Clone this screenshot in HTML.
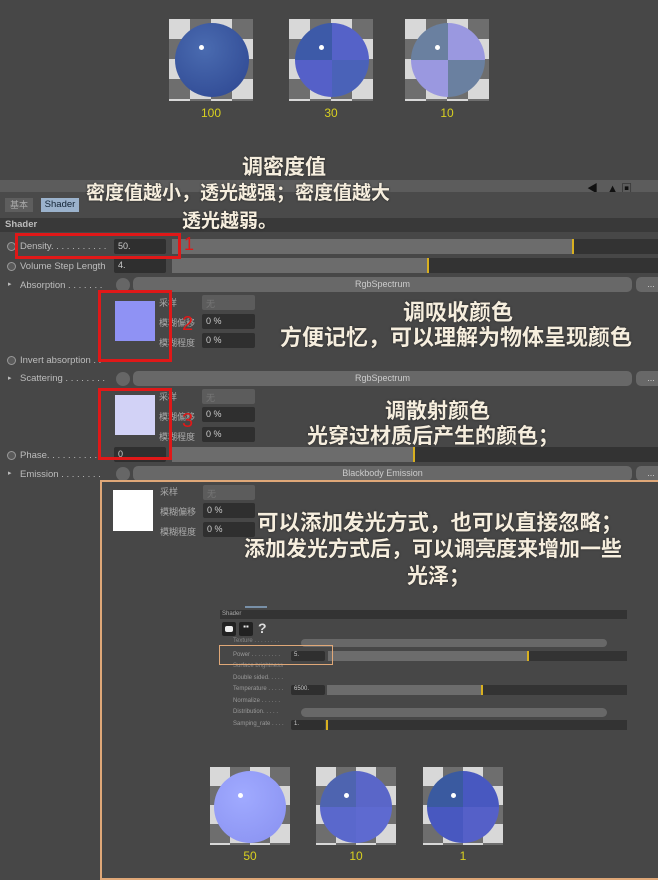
<!DOCTYPE html>
<html><head><meta charset="utf-8"><style>
*{margin:0;padding:0;box-sizing:border-box}
body{width:658px;height:877px;background:#474747;position:relative;overflow:hidden;font-family:"Liberation Sans","Noto Sans CJK SC",sans-serif}
.a{position:absolute}
.sph{position:absolute;width:84px;height:82px;background:
 conic-gradient(#6e6e6e 25%,#d8d8d8 0 50%,#6e6e6e 0 75%,#d8d8d8 0) 0 0/42px 40px;}
.ball{position:absolute;left:6px;top:4px;width:74px;height:74px;border-radius:50%}
.hl{position:absolute;width:5px;height:5px;border-radius:50%;background:#fff;left:24px;top:22px}
.lab{position:absolute;color:#d8d020;font-size:12px;text-align:center;width:84px}
.cap{position:absolute;color:#f6eede;font-size:21px;font-weight:bold;white-space:nowrap;text-shadow:0 0 2px #222}
.t{position:absolute;color:#bdbdbd;font-size:9.5px;white-space:nowrap}
.rad{position:absolute;width:9px;height:9px;border-radius:50%;border:1px solid #999;background:#5a5a5a}
.fld{position:absolute;background:#2f2f2f;color:#ccc;font-size:9px;padding:2px 4px;height:15px;border-radius:2px}
.bar{position:absolute;background:#333;height:15px}
.bar i{position:absolute;left:0;top:0;bottom:0;background:#6c6c6c;border-right:2px solid #d8b020}
.spec{position:absolute;background:#686868;height:15px;border-radius:5px;color:#ccc;font-size:9px;text-align:center;line-height:15px}
.btn{position:absolute;width:14px;height:14px;border-radius:50%;background:#666}
.red{position:absolute;border:3px solid #e01818}
.sw{position:absolute}
.cn{position:absolute;color:#aaa;font-size:9px}
</style></head><body>
<div class="sph" style="left:169px;top:19px"><div class="ball" style="background:radial-gradient(circle at 40% 35%,#4a6bb0,#2c4590)"><div class="hl"></div></div></div>
<div class="sph" style="left:289px;top:19px"><div class="ball" style="background:conic-gradient(#5562c8 25%,#4a62b8 0 50%,#5560c8 0 75%,#3d5aa8 0)"><div class="hl"></div></div></div>
<div class="sph" style="left:405px;top:19px"><div class="ball" style="background:conic-gradient(#9a98e0 25%,#6a80a0 0 50%,#9a98e0 0 75%,#6a80a0 0)"><div class="hl"></div></div></div>
<div class="lab" style="left:169px;top:106px">100</div>
<div class="lab" style="left:289px;top:106px">30</div>
<div class="lab" style="left:405px;top:106px">10</div>
<div class="cap" style="left:242px;top:151px;font-size:21px">调密度值</div>
<div class="a" style="left:0;top:180px;width:658px;height:12px;background:#5c5c5c"></div>
<div class="a" style="left:587px;top:180px;color:#111;font-size:11px">◀ &nbsp; ▲ ▣</div>
<div class="a" style="left:0;top:192px;width:658px;height:26px;background:#4a4a4a"></div>
<div class="a" style="left:5px;top:198px;width:28px;height:14px;background:#5e5e5e;color:#aaa;font-size:9px;text-align:center;line-height:14px">基本</div>
<div class="a" style="left:41px;top:198px;width:38px;height:14px;background:#9bb2cc;color:#123;font-size:9.5px;text-align:center;line-height:14px">Shader</div>
<div class="a" style="left:0;top:218px;width:658px;height:14px;background:#393939;color:#bbb;font-size:9.5px;font-weight:bold;padding-left:5px;line-height:14px">Shader</div>
<div class="cap" style="left:86px;top:178px;font-size:19px">密度值越小，透光越强；密度值越大</div>
<div class="cap" style="left:182px;top:206px;font-size:19px">透光越弱。</div>

<div class="rad" style="left:7px;top:242px"></div><div class="t" style="left:20px;top:241px">Density. . . . . . . . . . .</div>
<div class="fld" style="left:114px;top:239px;width:52px">50.</div>
<div class="bar" style="left:172px;top:239px;width:486px"><i style="width:402px"></i></div>
<div class="rad" style="left:7px;top:262px"></div><div class="t" style="left:20px;top:261px">Volume Step Length</div>
<div class="fld" style="left:114px;top:258px;width:52px">4.</div>
<div class="bar" style="left:172px;top:258px;width:486px"><i style="width:257px"></i></div>
<div class="t" style="left:8px;top:280px;font-size:7px">▸</div><div class="t" style="left:20px;top:280px">Absorption . . . . . . .</div>
<div class="btn" style="left:116px;top:278px"></div>
<div class="spec" style="left:133px;top:277px;width:499px">RgbSpectrum</div>
<div class="spec" style="left:636px;top:277px;width:30px">...</div>
<div class="sw" style="left:115px;top:301px;width:40px;height:40px;background:#8f92f4"></div>
<div class="cn" style="left:159px;top:296px">采样</div><div class="fld" style="left:202px;top:295px;width:53px;background:#5c5c5c;color:#777">无</div>
<div class="cn" style="left:159px;top:316px">模糊偏移</div><div class="fld" style="left:202px;top:314px;width:53px">0 %</div>
<div class="cn" style="left:159px;top:336px">模糊程度</div><div class="fld" style="left:202px;top:333px;width:53px">0 %</div>
<div class="cap" style="left:403px;top:295px;font-size:22px">调吸收颜色</div>
<div class="cap" style="left:280px;top:320px;font-size:22px">方便记忆，可以理解为物体呈现颜色</div>
<div class="rad" style="left:7px;top:356px"></div><div class="t" style="left:20px;top:355px">Invert absorption . .</div>
<div class="t" style="left:8px;top:374px;font-size:7px">▸</div><div class="t" style="left:20px;top:373px">Scattering . . . . . . . .</div>
<div class="btn" style="left:116px;top:372px"></div>
<div class="spec" style="left:133px;top:371px;width:499px">RgbSpectrum</div>
<div class="spec" style="left:636px;top:371px;width:30px">...</div>
<div class="sw" style="left:115px;top:395px;width:40px;height:40px;background:#d2d2f6"></div>
<div class="cn" style="left:159px;top:390px">采样</div><div class="fld" style="left:202px;top:389px;width:53px;background:#5c5c5c;color:#777">无</div>
<div class="cn" style="left:159px;top:410px">模糊偏移</div><div class="fld" style="left:202px;top:407px;width:53px">0 %</div>
<div class="cn" style="left:159px;top:430px">模糊程度</div><div class="fld" style="left:202px;top:427px;width:53px">0 %</div>
<div class="cap" style="left:385px;top:395px;font-size:21px">调散射颜色</div>
<div class="cap" style="left:307px;top:420px;font-size:21px">光穿过材质后产生的颜色；</div>
<div class="rad" style="left:7px;top:451px"></div><div class="t" style="left:20px;top:450px">Phase. . . . . . . . . . .</div>
<div class="fld" style="left:114px;top:447px;width:52px">0</div>
<div class="bar" style="left:172px;top:447px;width:486px"><i style="width:243px"></i></div>
<div class="t" style="left:8px;top:469px;font-size:7px">▸</div><div class="t" style="left:20px;top:469px">Emission . . . . . . . .</div>
<div class="btn" style="left:116px;top:467px"></div>
<div class="spec" style="left:133px;top:466px;width:499px">Blackbody Emission</div>
<div class="spec" style="left:636px;top:466px;width:30px">...</div>
<div class="red" style="left:15px;top:233px;width:166px;height:26px"></div>
<div class="a" style="left:184px;top:234px;color:#e01818;font-size:18px">1</div>
<div class="red" style="left:98px;top:290px;width:74px;height:72px"></div>
<div class="a" style="left:182px;top:313px;color:#e01818;font-size:20px">2</div>
<div class="red" style="left:98px;top:388px;width:74px;height:72px"></div>
<div class="a" style="left:182px;top:410px;color:#e01818;font-size:20px">3</div>
<div class="a" style="left:100px;top:480px;width:560px;height:400px;border:2px solid #e0a878;background:#474747"></div>
<div class="sw" style="left:113px;top:490px;width:40px;height:41px;background:#fff"></div>
<div class="cn" style="left:160px;top:485px">采样</div><div class="fld" style="left:203px;top:485px;width:52px;background:#5c5c5c;color:#777">无</div>
<div class="cn" style="left:160px;top:505px">模糊偏移</div><div class="fld" style="left:203px;top:503px;width:52px">0 %</div>
<div class="cn" style="left:160px;top:525px">模糊程度</div><div class="fld" style="left:203px;top:522px;width:52px">0 %</div>
<div class="cap" style="left:257px;top:506px;font-size:21.5px">可以添加发光方式，也可以直接忽略；</div>
<div class="cap" style="left:244px;top:533px;font-size:21px">添加发光方式后，可以调亮度来增加一些</div>
<div class="cap" style="left:407px;top:560px;font-size:21px">光泽；</div>
<div class="a" style="left:245px;top:606px;width:22px;height:2px;background:#7890a8"></div>
<div class="a" style="left:220px;top:610px;width:407px;height:9px;background:#333;color:#aaa;font-size:6px;padding-left:2px;line-height:9px">Shader</div>
<div class="a" style="left:222px;top:622px;width:14px;height:14px;background:#222;border-radius:2px"><div style="margin:4px 3px;width:8px;height:6px;background:#eee;border-radius:2px"></div></div>
<div class="a" style="left:239px;top:622px;width:14px;height:14px;background:#222;border-radius:2px;color:#eee;font-size:8px;text-align:center">▪▪</div>
<div class="a" style="left:258px;top:620px;color:#ddd;font-size:14px;font-weight:bold">?</div>
<div class="t" style="left:233px;top:638px;font-size:6px;color:#888">Texture . . . . . . . .</div>
<div class="spec" style="left:301px;top:639px;width:306px;height:8px"></div>
<div class="t" style="left:233px;top:652px;font-size:6px;color:#999">Power . . . . . . . . .</div>
<div class="fld" style="left:291px;top:651px;width:34px;height:10px;font-size:6px;padding:1px 3px">5.</div>
<div class="bar" style="left:328px;top:651px;width:299px;height:10px"><i style="width:201px"></i></div>
<div class="t" style="left:233px;top:663px;font-size:6px;color:#888">Surface brightness</div>
<div class="t" style="left:233px;top:675px;font-size:6px;color:#999">Double sided. . . . .</div>
<div class="t" style="left:233px;top:686px;font-size:6px;color:#999">Temperature . . . . .</div>
<div class="fld" style="left:291px;top:685px;width:34px;height:10px;font-size:6px;padding:1px 3px">6500.</div>
<div class="bar" style="left:327px;top:685px;width:300px;height:10px"><i style="width:156px"></i></div>
<div class="t" style="left:233px;top:698px;font-size:6px;color:#999">Normalize . . . . . .</div>
<div class="t" style="left:233px;top:709px;font-size:6px;color:#999">Distribution. . . . .</div>
<div class="spec" style="left:301px;top:708px;width:306px;height:9px"></div>
<div class="t" style="left:233px;top:721px;font-size:6px;color:#999">Samping_rate . . . .</div>
<div class="fld" style="left:291px;top:720px;width:34px;height:10px;font-size:6px;padding:1px 3px">1.</div>
<div class="bar" style="left:326px;top:720px;width:301px;height:10px"><i style="width:1px"></i></div>
<div class="a" style="left:219px;top:645px;width:114px;height:20px;border:1.5px solid #e0a878"></div>
<div class="sph" style="left:210px;top:767px;width:80px;height:78px;background-size:40px 38px"><div class="ball" style="left:4px;width:72px;height:72px;background:radial-gradient(circle at 40% 35%,#a0aaff,#8890f0)"><div class="hl"></div></div></div>
<div class="sph" style="left:316px;top:767px;width:80px;height:78px;background-size:40px 38px"><div class="ball" style="left:4px;width:72px;height:72px;background:conic-gradient(#5a66c8 25%,#5e6ad0 0 50%,#5a68cc 0 75%,#4e64b0 0)"><div class="hl"></div></div></div>
<div class="sph" style="left:423px;top:767px;width:80px;height:78px;background-size:40px 38px"><div class="ball" style="left:4px;width:72px;height:72px;background:conic-gradient(#4858c0 25%,#5560c8 0 50%,#4858c0 0 75%,#3a5aa0 0)"><div class="hl"></div></div></div>
<div class="lab" style="left:208px;top:849px">50</div>
<div class="lab" style="left:314px;top:849px">10</div>
<div class="lab" style="left:421px;top:849px">1</div>
</body></html>
